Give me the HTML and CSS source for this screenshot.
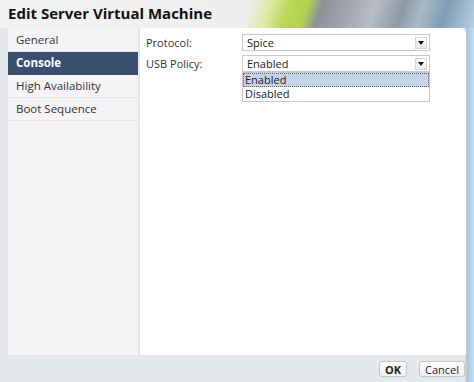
FILE: index.html
```html
<!DOCTYPE html>
<html lang="en">
<head>
  <meta charset="UTF-8">
  <title>Edit Server Virtual Machine</title>
  <link rel="stylesheet" href="styles.css">
</head>
<body>
  <div class="window">
    <div class="titlebar">
      <h1>Edit Server Virtual Machine</h1>
    </div>
    <div class="panel">
      <ul class="nav">
        <li>General</li>
        <li class="active">Console</li>
        <li>High Availability</li>
        <li>Boot Sequence</li>
      </ul>
      <div class="content">
        <div class="row">
          <label>Protocol:</label>
          <div class="select">
            <span>Spice</span>
            <span class="arrow"></span>
          </div>
        </div>
        <div class="row">
          <label>USB Policy:</label>
          <div class="select-wrap">
            <div class="select">
              <span>Enabled</span>
              <span class="arrow"></span>
            </div>
            <ul class="options">
              <li class="hover">Enabled</li>
              <li>Disabled</li>
            </ul>
          </div>
        </div>
      </div>
    </div>
    <div class="footer">
      <button class="btn ok">OK</button>
      <button class="btn">Cancel</button>
    </div>
  </div>
</body>
</html>
```

FILE: styles.css
```css
* { box-sizing: border-box; margin: 0; padding: 0; }
body {
  width: 474px;
  height: 382px;
  overflow: hidden;
  font-family: "Open Sans", "Noto Sans", sans-serif;
  font-size: 11px;
  color: #222;
  background: #e4e7eb;
}
.window {
  display: flex;
  flex-direction: column;
  height: 382px;
  background: linear-gradient(90deg, #e4e7eb 0%, #e4e7eb 98%, #a7c6df 98.5%, #c9ddec 100%);
}
/* header artwork: light on the left, lime swoosh, grey streaks, blue edge */
.titlebar {
  height: 28px;
  padding: 3px 0 0 8px;
  background-color: #eeeeee;
  background-image: linear-gradient(108deg, #f2f2f2 0%, #eeeeec 52%, #dfeaa8 56%, #bcd95a 60%, #b2d24c 64%, #8c9298 67%, #9ea4aa 72%, #b8bec4 78%, #8c9aa6 84%, #a9b9c6 88%, #7f9db6 93%, #b6d0e3 100%);
}
.titlebar h1 {
  font-size: 15px;
  font-weight: bold;
  color: #111;
}
.panel {
  flex: 1;
  display: flex;
  margin: 0 8px;
  background: #fff;
  border-radius: 0 6px 0 0;
  overflow: hidden;
}
.nav {
  list-style: none;
  width: 132px;
  background: #f6f3f6;
  border-right: 2px solid #e9e7ea;
}
.nav li {
  height: 23px;
  line-height: 22px;
  padding-left: 8px;
  font-size: 11.5px;
  color: #333;
  border-bottom: 1px solid #e6e3e7;
}
.nav li:first-child { margin-top: 1px; }
.nav li.active {
  background: #3a4e6d;
  color: #fff;
  font-weight: bold;
  border-bottom-color: #3a4e6d;
}
.content {
  flex: 1;
  padding: 6px 0 0 6px;
}
.row {
  display: flex;
  align-items: flex-start;
  margin-bottom: 4px;
}
.row label {
  width: 96px;
  line-height: 17px;
  color: #333;
}
.select-wrap { position: relative; }
.select {
  display: flex;
  align-items: center;
  justify-content: space-between;
  width: 188px;
  height: 17px;
  padding: 0 2px 0 4px;
  border: 1px solid #c9c9c9;
  background: #fff;
  color: #222;
}
.arrow {
  width: 12px;
  height: 12px;
  border: 1px solid #d6d6d6;
  background: linear-gradient(#fdfdfd, #ececec);
  position: relative;
}
.arrow::after {
  content: "";
  position: absolute;
  left: 2px;
  top: 3px;
  border-left: 3px solid transparent;
  border-right: 3px solid transparent;
  border-top: 4px solid #111;
}
.options {
  position: absolute;
  left: 0;
  top: 17px;
  width: 188px;
  list-style: none;
  background: #fff;
  border: 1px solid #c9c9c9;
}
.options li {
  height: 14px;
  line-height: 13px;
  padding-left: 2px;
}
.options li.hover {
  background: #c6d4ea;
  outline: 1px dotted #666;
  outline-offset: -1px;
}
.footer {
  height: 27px;
  display: flex;
  justify-content: flex-end;
  align-items: center;
  gap: 12px;
  padding-right: 9px;
}
.btn {
  height: 16px;
  padding: 0 5px;
  font-family: inherit;
  font-size: 11px;
  color: #222;
  background: linear-gradient(#ffffff, #f0f0f0);
  border: 1px solid #c7c7c7;
  border-radius: 3px;
}
.btn.ok { font-weight: bold; min-width: 28px; }
```
